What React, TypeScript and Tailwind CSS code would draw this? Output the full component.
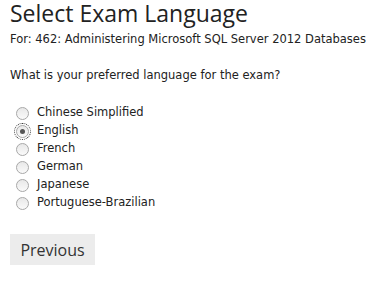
import { useState } from "react";

const languages = [
  "Chinese Simplified",
  "English",
  "French",
  "German",
  "Japanese",
  "Portuguese-Brazilian",
];

export default function App() {
  const [lang, setLang] = useState("English");

  return (
    <div className="min-h-screen bg-white px-[10px] text-[#222]" style={{ fontFamily: "'DejaVu Sans', Verdana, sans-serif" }}>
      <h1 className="text-[23px] leading-[26px] text-[#222]" style={{ fontFamily: "'Open Sans', sans-serif" }}>
        Select Exam Language
      </h1>
      <p className="mt-[6px] text-[11.5px] leading-[14px]">
        For: 462: Administering Microsoft SQL Server 2012 Databases
      </p>
      <p className="mt-[22px] text-[11.5px] leading-[14px]">What is your preferred language for the exam?</p>

      <div className="mt-[22px] flex flex-col">
        {languages.map((l) => (
          <label key={l} className="flex h-[18px] items-center gap-[8px] pl-[6px] text-[11.5px]">
            <span
              className={
                "flex h-[13px] w-[13px] items-center justify-center rounded-full border border-[#a8a8a8] bg-gradient-to-b from-[#e8e8e8] to-[#fafafa] " +
                (lang === l ? "outline outline-1 outline-dotted outline-offset-1 outline-[#333]" : "")
              }
              onClick={() => setLang(l)}
            >
              {lang === l && <span className="h-[5px] w-[5px] rounded-full bg-[#555]" />}
            </span>
            <span>{l}</span>
          </label>
        ))}
      </div>

      <button className="mt-[22px] h-[31px] w-[85px] bg-[#ececec] text-[16px] text-[#333]" style={{ fontFamily: "'Open Sans', sans-serif" }}>
        Previous
      </button>
    </div>
  );
}
